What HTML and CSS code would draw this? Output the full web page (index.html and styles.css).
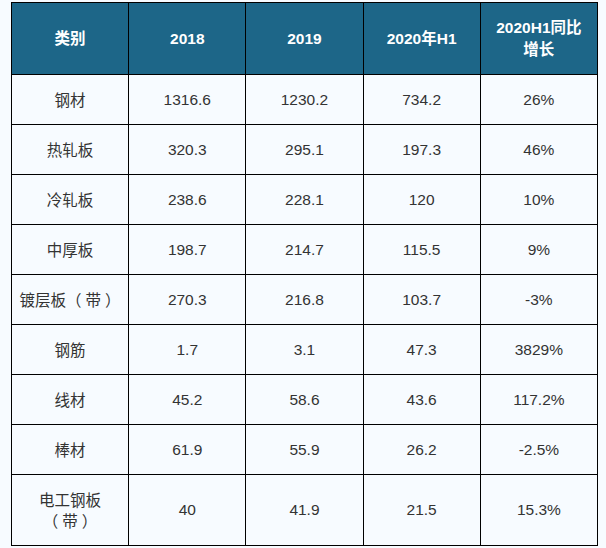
FILE: index.html
```html
<!DOCTYPE html>
<html lang="zh">
<head>
<meta charset="utf-8">
<link rel="stylesheet" href="styles.css">
</head>
<body>
<table class="data">
  <thead>
    <tr class="head">
      <th>类别</th>
      <th>2018</th>
      <th>2019</th>
      <th>2020年H1</th>
      <th>2020H1同比增长</th>
    </tr>
  </thead>
  <tbody>
    <tr><td class="cat">钢材</td><td>1316.6</td><td>1230.2</td><td>734.2</td><td>26%</td></tr>
    <tr><td class="cat">热轧板</td><td>320.3</td><td>295.1</td><td>197.3</td><td>46%</td></tr>
    <tr><td class="cat">冷轧板</td><td>238.6</td><td>228.1</td><td>120</td><td>10%</td></tr>
    <tr><td class="cat">中厚板</td><td>198.7</td><td>214.7</td><td>115.5</td><td>9%</td></tr>
    <tr><td class="cat single">镀层板<span class="open">（</span>带<span class="close">）</span></td><td>270.3</td><td>216.8</td><td>103.7</td><td>-3%</td></tr>
    <tr><td class="cat">钢筋</td><td>1.7</td><td>3.1</td><td>47.3</td><td>3829%</td></tr>
    <tr><td class="cat">线材</td><td>45.2</td><td>58.6</td><td>43.6</td><td>117.2%</td></tr>
    <tr><td class="cat">棒材</td><td>61.9</td><td>55.9</td><td>26.2</td><td>-2.5%</td></tr>
    <tr class="tall"><td class="cat">电工钢板<span class="open">（</span>带<span class="close">）</span></td><td>40</td><td>41.9</td><td>21.5</td><td>15.3%</td></tr>
  </tbody>
</table>
</body>
</html>
```

FILE: styles.css
```css
html, body {
  margin: 0;
  background: #f7fbff;
}
body {
  padding: 2px 8px 0 11px;
  font-family: "Liberation Sans", Arial, "Noto Sans CJK SC", sans-serif;
  font-size: 15.5px;
  color: #333333;
}
.data {
  border-collapse: collapse;
  width: 587px;
  table-layout: fixed;
}
.data th,
.data td {
  border: 1px solid #000000;
  text-align: center;
  vertical-align: middle;
  padding: 0 10px;
  line-height: 21.5px;
}
.data td.cat {
  font-family: "Noto Sans CJK SC", sans-serif;
}
.data td.single {
  white-space: nowrap;
  padding: 0;
}
.open {
  margin-right: 4px;
}
.close {
  margin-left: 4px;
}
.data th {
  background: #1d6688;
  color: #ffffff;
  font-weight: bold;
}
.head {
  height: 72px;
}
.data tbody tr {
  height: 50px;
}
.data tbody tr.tall {
  height: 71px;
}
```
